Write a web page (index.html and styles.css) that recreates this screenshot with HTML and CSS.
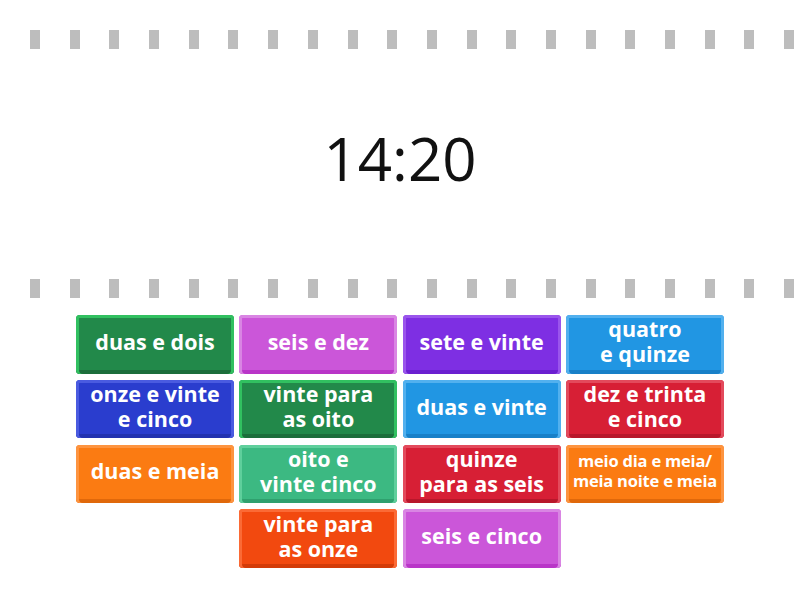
FILE: index.html
```html
<!DOCTYPE html>
<html lang="pt">
<head>
    <meta charset="UTF-8">
    <meta name="viewport" content="width=device-width, initial-scale=1.0">
    <title>Que horas são?</title>
    <link rel="stylesheet" href="styles.css">
</head>
<body>

    <div class="page">
        <div class="dashes">
            <span></span><span></span><span></span><span></span><span></span>
            <span></span><span></span><span></span><span></span><span></span>
            <span></span><span></span><span></span><span></span><span></span>
            <span></span><span></span><span></span><span></span><span></span>
        </div>

        <div class="question">14:20</div>

        <div class="dashes">
            <span></span><span></span><span></span><span></span><span></span>
            <span></span><span></span><span></span><span></span><span></span>
            <span></span><span></span><span></span><span></span><span></span>
            <span></span><span></span><span></span><span></span><span></span>
        </div>

        <div class="answers">
            <div class="tile green">duas e dois</div>
            <div class="tile magenta">seis e dez</div>
            <div class="tile purple">sete e vinte</div>
            <div class="tile sky">quatro<br>e quinze</div>

            <div class="tile blue">onze e vinte<br>e cinco</div>
            <div class="tile green">vinte para<br>as oito</div>
            <div class="tile sky">duas e vinte</div>
            <div class="tile red">dez e trinta<br>e cinco</div>

            <div class="tile orange">duas e meia</div>
            <div class="tile teal">oito e<br>vinte cinco</div>
            <div class="tile red">quinze<br>para as seis</div>
            <div class="tile orange small">meio dia e meia/<br>meia noite e meia</div>

            <div class="tile empty"></div>
            <div class="tile tomato">vinte para<br>as onze</div>
            <div class="tile magenta">seis e cinco</div>
        </div>
    </div>

</body>
</html>
```

FILE: styles.css
```css
body {
    font-family: 'Open Sans', 'Liberation Sans', sans-serif;
    background-color: #ffffff;
    color: #111;
    margin: 0;
    padding: 0;
}

.page {
    width: 800px;
    height: 600px;
    overflow: hidden;
}

.dashes {
    display: flex;
    gap: 29.7px;
    padding-left: 30px;
    height: 19px;
}

.dashes span {
    flex: none;
    width: 10px;
    height: 19px;
    background-color: #bdbdbd;
}

.dashes:first-child {
    margin-top: 30px;
}

.question {
    height: 230px;
    display: flex;
    align-items: center;
    justify-content: center;
    font-size: 60px;
    font-weight: 400;
    color: #111;
    padding-bottom: 12px;
    box-sizing: border-box;
}

.answers {
    display: grid;
    grid-template-columns: repeat(4, 158px);
    grid-auto-rows: 58.5px;
    column-gap: 5.3px;
    row-gap: 6.3px;
    justify-content: center;
    margin-top: 17px;
}

.tile {
    display: flex;
    align-items: center;
    justify-content: center;
    text-align: center;
    color: #fff;
    font-weight: 700;
    font-size: 21.5px;
    line-height: 25px;
    border-radius: 4px;
    padding-bottom: 6px;
    box-sizing: border-box;
    box-shadow:
        inset 0 3px 0 var(--light),
        inset 3px 0 0 var(--light),
        inset -3px 0 0 var(--light),
        inset 0 -4px 0 var(--dark);
    background-color: var(--base);
}

.tile.small {
    font-size: 16.5px;
    line-height: 20px;
    letter-spacing: -0.2px;
}

.tile.empty {
    visibility: hidden;
}

/* colour sets: base, bevel light, bevel dark */
.green   { --base: #22894a; --light: #31c060; --dark: #1c6e3b; }
.magenta { --base: #cb56d9; --light: #d985e3; --dark: #b935c8; }
.purple  { --base: #7e2fe3; --light: #9a55ec; --dark: #6b1fd0; }
.sky     { --base: #2196e3; --light: #52b0ee; --dark: #1880c8; }
.blue    { --base: #2a3dce; --light: #4a5be0; --dark: #2232b0; }
.red     { --base: #d71f35; --light: #e34a5c; --dark: #b8172b; }
.orange  { --base: #fb7b12; --light: #fd9440; --dark: #e0680a; }
.teal    { --base: #3cb982; --light: #5fcf9c; --dark: #2fa06e; }
.tomato  { --base: #f2490f; --light: #fb6a35; --dark: #d33b08; }
```
